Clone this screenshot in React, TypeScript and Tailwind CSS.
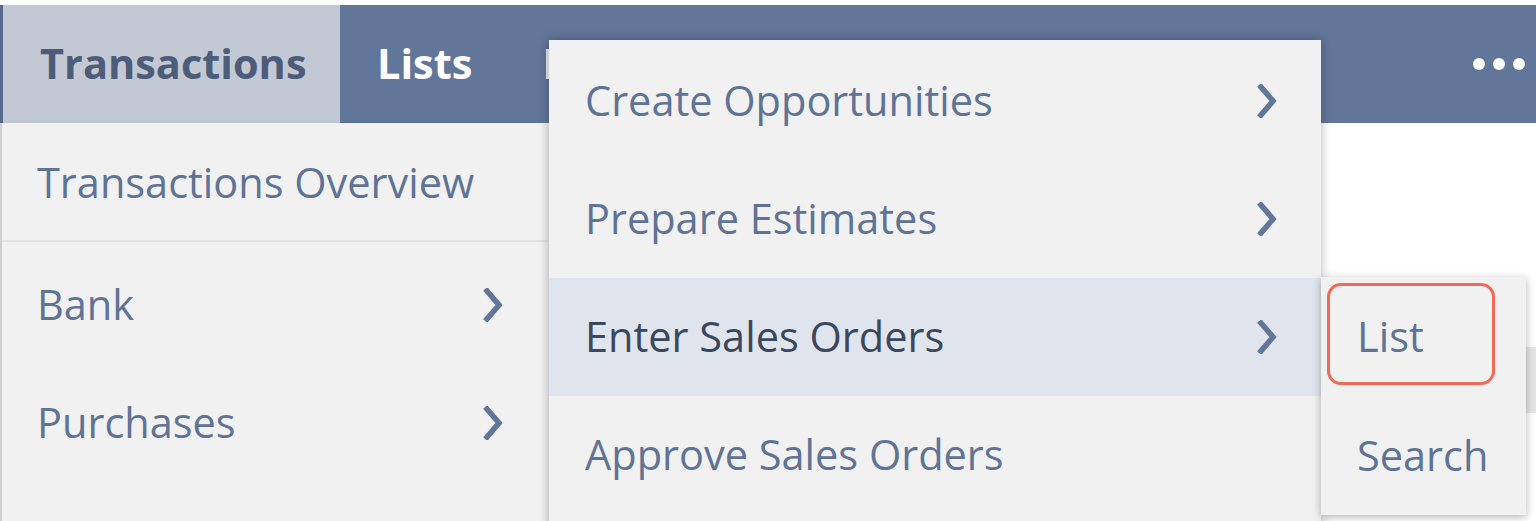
import React from "react";

function Chevron({ className = "" }: { className?: string }) {
  return (
    <svg width="22" height="34" viewBox="0 0 22 34" className={className}>
      <polyline
        points="5,3 17,17 5,31"
        fill="none"
        stroke="#62769a"
        strokeWidth="5.5"
        strokeLinecap="square"
        strokeLinejoin="miter"
      />
    </svg>
  );
}

export default function App() {
  const font = { fontFamily: '"Open Sans", "Noto Sans", sans-serif' };
  return (
    <div
      className="relative w-[1536px] h-[521px] overflow-hidden bg-white"
      style={font}
    >
      {/* top strip */}
      <div className="h-[5px] bg-white" />
      {/* nav bar */}
      <div className="flex h-[118px] items-center bg-[#62769a] border-l-[3px] border-[#56698c]">
        <div className="flex h-full w-[337px] items-center bg-[#c2c9d4] pl-[37px] text-[41.5px] font-bold text-[#4d5c78] leading-none">
          Transactions
        </div>
        <div className="flex h-full items-center pl-[37px] pr-[74px] text-[41.5px] font-bold text-white leading-none">
          Lists
        </div>
        <div className="h-[30px] w-[6px] bg-[#e8ebf0]" />
        <div className="ml-auto mr-[11px] flex items-center gap-[8px]">
          <span className="block h-[12px] w-[12px] rounded-full bg-white" />
          <span className="block h-[12px] w-[12px] rounded-full bg-white" />
          <span className="block h-[12px] w-[12px] rounded-full bg-white" />
        </div>
      </div>

      {/* background content behind menus */}
      <div className="absolute left-[1500px] top-[347px] h-[66px] w-[40px] bg-[#e4e4e4]" />

      {/* first dropdown */}
      <div className="absolute left-0 top-[123px] h-[420px] w-[548px] border-l-2 border-[#cfcfcf] bg-[#f1f1f1] shadow-[0_2px_6px_rgba(0,0,0,0.15)]">
        <div className="flex h-[119px] items-center border-b-2 border-[#e2e2e2] pl-[35px] pt-[3px] text-[41.5px] text-[#5f7396] leading-none">
          Transactions Overview
        </div>
        <div className="flex h-[118px] items-center justify-between pl-[35px] pr-[44px] pt-[8px] text-[41.5px] text-[#5f7396] leading-none">
          <span>Bank</span>
          <Chevron />
        </div>
        <div className="flex h-[118px] items-center justify-between pl-[35px] pr-[44px] pt-[8px] text-[41.5px] text-[#5f7396] leading-none">
          <span>Purchases</span>
          <Chevron />
        </div>
      </div>

      {/* second dropdown */}
      <div className="absolute left-[549px] top-[40px] h-[520px] w-[772px] bg-[#f1f1f1] pt-[2px] shadow-[0_0_10px_rgba(0,0,0,0.3)]">
        {[
          { t: "Create Opportunities", c: true },
          { t: "Prepare Estimates", c: true },
          { t: "Enter Sales Orders", c: true, active: true },
          { t: "Approve Sales Orders", c: false },
        ].map((it) => (
          <div
            key={it.t}
            className={
              it.active
                ? "flex h-[118px] items-center justify-between bg-[#e0e4ec] pl-[36px] pr-[43px] text-[41.5px] text-[#3b475c] leading-none"
                : "flex h-[118px] items-center justify-between pl-[36px] pr-[43px] text-[41.5px] text-[#5f7396] leading-none"
            }
          >
            <span>{it.t}</span>
            {it.c && <Chevron />}
          </div>
        ))}
      </div>

      {/* third dropdown */}
      <div className="absolute left-[1321px] top-[277px] flex h-[238px] w-[205px] flex-col bg-[#f1f1f1] px-[6px] pt-[6px] shadow-[0_2px_8px_rgba(0,0,0,0.3)]">
        <div className="flex h-[102px] w-[168px] items-center rounded-[14px] border-[3px] border-[#ef6a57] pl-[27px] pt-[5px] text-[41.5px] text-[#5f7396] leading-none">
          List
        </div>
        <div className="flex h-[130px] items-center pl-[30px] pt-[12px] text-[41.5px] text-[#5f7396] leading-none">
          Search
        </div>
      </div>
    </div>
  );
}
